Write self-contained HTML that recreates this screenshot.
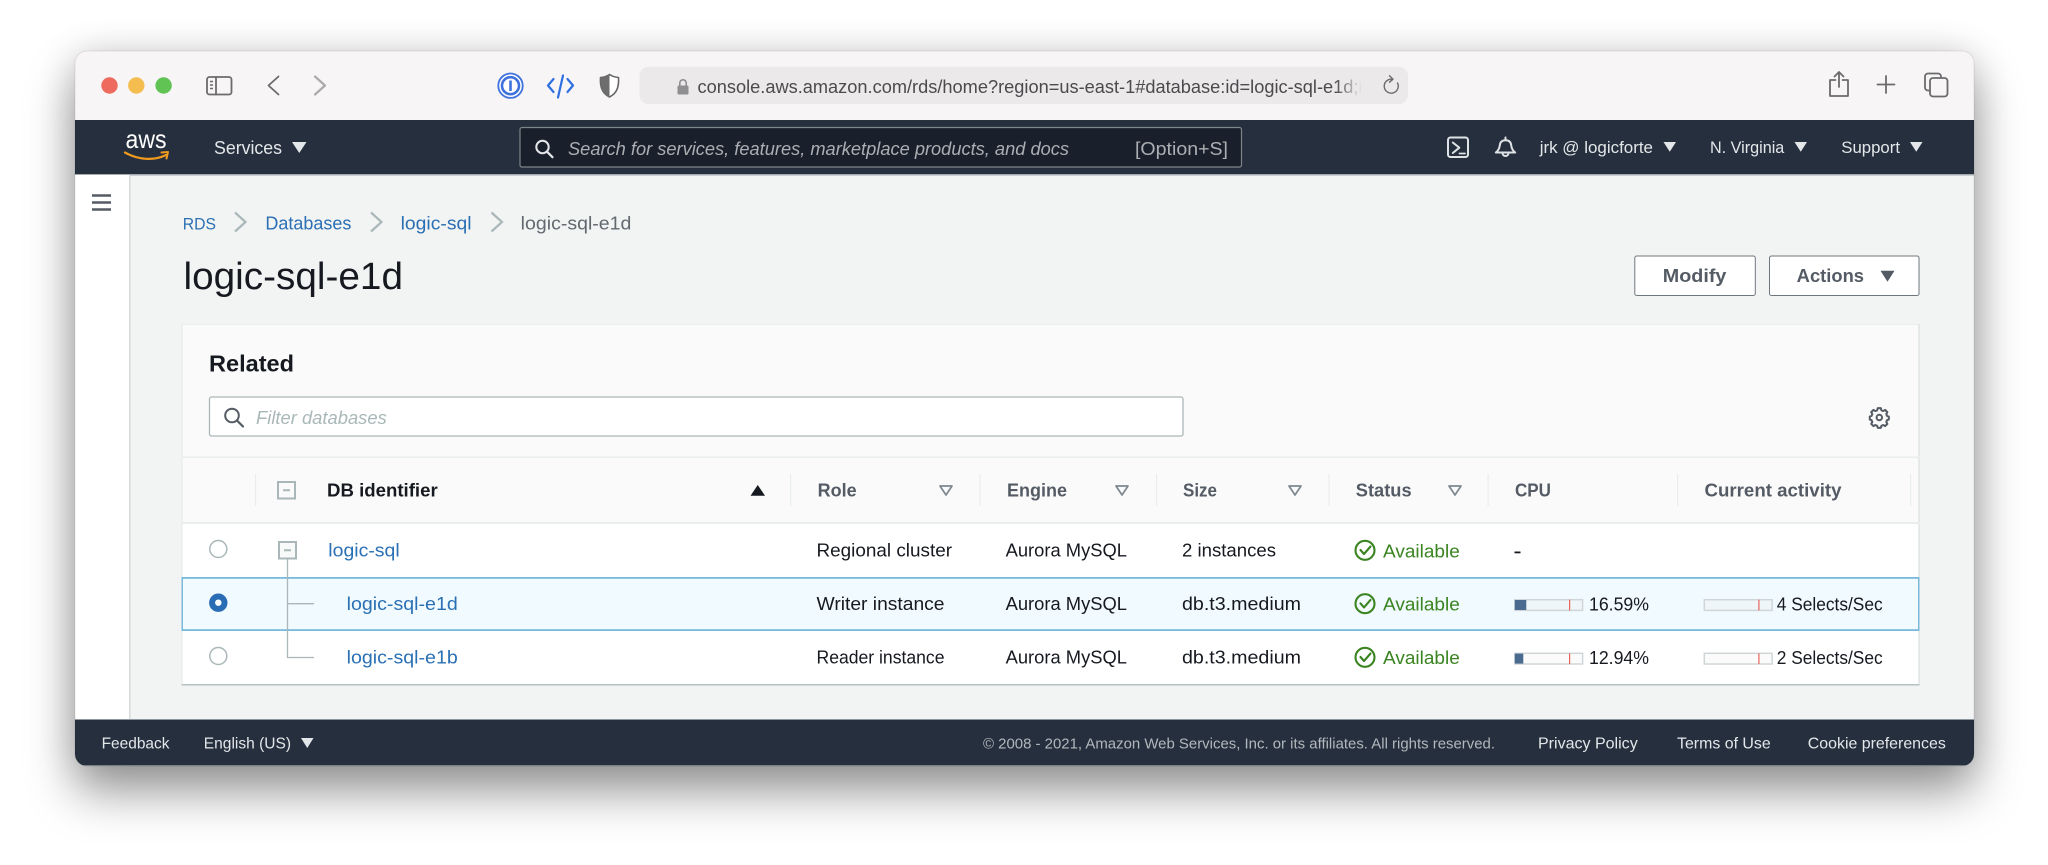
<!DOCTYPE html>
<html lang="en"><head><meta charset="utf-8"><title>logic-sql-e1d</title>
<style>
html,body{margin:0;padding:0;background:#fff;width:2048px;height:865px;overflow:hidden}
#shadow{position:absolute;left:75px;top:51px;width:1899px;height:715px;border-radius:12px;background:#fff;box-shadow:0 26px 48px rgba(0,0,0,.40),0 0 36px rgba(0,0,0,.13)}
svg{position:absolute;left:0;top:0;filter:blur(.35px)}
text{font-family:"Liberation Sans",Arial,sans-serif;font-size:18px;white-space:pre}
.b{font-weight:700}
.i{font-style:italic}
.lnk{fill:#2a70b4}
.dk{fill:#16191f}
.gy{fill:#545b64}
.nv{fill:#e4e7e9;font-size:17px}
.gn{fill:#3a8421}
.ft{fill:#e4e7e9;font-size:16px}
.tb{fill:none;stroke:#6b6b6d;stroke-width:1.8;stroke-linecap:round;stroke-linejoin:round}
.wh{fill:none;stroke:#dfe3e5;stroke-width:2;stroke-linecap:round;stroke-linejoin:round}
</style></head><body>
<div id="shadow"></div>
<svg width="2048" height="865" viewBox="0 0 2048 865" xmlns="http://www.w3.org/2000/svg">
<defs>
<clipPath id="w"><rect x="75" y="51" width="1899" height="715" rx="12"/></clipPath>
<linearGradient id="fade" x1="0" x2="1" y1="0" y2="0"><stop offset="0" stop-color="#ebe9ea" stop-opacity="0"/><stop offset=".75" stop-color="#ebe9ea"/><stop offset="1" stop-color="#ebe9ea"/></linearGradient>
</defs>
<g clip-path="url(#w)">
<!-- base -->
<rect x="75" y="51" width="1899" height="715" fill="#f2f3f3"/>
<!-- toolbar -->
<rect x="75" y="51" width="1899" height="69" fill="#f7f5f6"/>
<circle cx="109.500" cy="85.500" r="8.200" fill="#ee6a5e"/>
<circle cx="136.300" cy="85.500" r="8.200" fill="#f5bd4f"/>
<circle cx="163.600" cy="85.500" r="8.200" fill="#61c354"/>
<!-- sidebar icon -->
<rect x="207" y="77" width="24.500" height="17.500" rx="2.500" class="tb"/>
<path d="M216 77v17.500" class="tb"/>
<path d="M210 81.500h3M210 85h3M210 88.500h3" stroke="#6b6b6d" stroke-width="1.400"/>
<path d="M278.500 76.500l-10 9 10 9" class="tb" stroke-width="2.200"/>
<path d="M315 76.500l10 9-10 9" fill="none" stroke="#aaa9ab" stroke-width="2.200" stroke-linecap="round" stroke-linejoin="round"/>
<!-- 1password -->
<circle cx="510.500" cy="85.700" r="12.200" fill="#fff" stroke="#3f72dd" stroke-width="1.800"/>
<circle cx="510.500" cy="85.700" r="8.500" fill="#fff" stroke="#3f72dd" stroke-width="2.600"/>
<path d="M510.500 80.500v10.500" stroke="#3f72dd" stroke-width="2.600"/>
<!-- dev -->
<path d="M553.500 79l-5.500 6.500 5.500 6.500M567.500 79l5.500 6.500-5.500 6.500M563 75.500l-5 22" fill="none" stroke="#2f6fe0" stroke-width="2.200" stroke-linecap="round" stroke-linejoin="round"/>
<!-- shield -->
<path d="M609.500 74.500c3 2 6 2.800 9 3 .5 8.500-1 15.500-9 19.500-8-4-9.500-11-9-19.500 3-.2 6-1 9-3z" fill="#fff" stroke="#666" stroke-width="1.600" stroke-linejoin="round"/>
<path d="M609.500 74.500c-3 2-6 2.800-9 3-.5 8.500 1 15.500 9 19.500z" fill="#6d6d6d"/>
<!-- url bar -->
<rect x="639.500" y="66.700" width="768.500" height="37.300" rx="9" fill="#ebe9ea"/>
<rect x="677.500" y="85.500" width="11" height="9" rx="1.500" fill="#8f8e90"/>
<path d="M679.800 85.500v-2.500a3.200 3.200 0 0 1 6.400 0v2.500" fill="none" stroke="#8f8e90" stroke-width="1.600"/>
<text x="697.500" y="93" style="font-size:18px" fill="#4b4a4c" textLength="665" lengthAdjust="spacingAndGlyphs">console.aws.amazon.com/rds/home?region=us-east-1#database:id=logic-sql-e1d;i</text>
<rect x="1335" y="70" width="36" height="30" fill="url(#fade)"/>
<path d="M1397.500 83a7 7 0 1 1-5.500-3.800" fill="none" stroke="#6b6b6d" stroke-width="1.400" stroke-linecap="round"/>
<path d="M1389.500 75.800l3.500 3.400-3.500 3" fill="none" stroke="#6b6b6d" stroke-width="1.400" stroke-linecap="round" stroke-linejoin="round"/>
<!-- right toolbar -->
<path d="M1835.500 80h-5.500v16h18v-16h-5.500M1839 87v-15M1834.500 76.500l4.500-4.500 4.500 4.500" class="tb" stroke-width="1.500"/>
<path d="M1886 76v17M1877.500 84.500h17" class="tb" stroke-width="1.700"/>
<path d="M1929 90.500h-1a3 3 0 0 1-3-3v-11a3 3 0 0 1 3-3h10a3 3 0 0 1 3 3v1" class="tb" stroke-width="1.500"/>
<rect x="1930" y="78" width="17.500" height="18.500" rx="3" class="tb" stroke-width="1.500"/>
<!-- nav -->
<rect x="75" y="120" width="1899" height="55" fill="#252f3e"/>
<rect x="75" y="174" width="1899" height="1.500" fill="#a3abb0"/>
<text x="125.500" y="148" style="font-size:26px" fill="#fff" textLength="41" lengthAdjust="spacingAndGlyphs">aws</text>
<path d="M125 152.500c13 7.500 29 8.500 41 2.500" fill="none" stroke="#ef9a1f" stroke-width="2.200" stroke-linecap="round"/>
<path d="M161.500 152.500l6.500-.5-1.500 6.500" fill="none" stroke="#ef9a1f" stroke-width="2" stroke-linecap="round" stroke-linejoin="round"/>
<text x="214" y="154" fill="#e4e7e9" textLength="68" lengthAdjust="spacingAndGlyphs">Services</text>
<path d="M292 142h14.500l-7.250 11z" fill="#e4e7e9"/>
<rect x="520" y="127.500" width="721.500" height="39.500" rx="2" fill="#1a202b" stroke="#7d8688" stroke-width="1.200"/>
<circle cx="542.500" cy="147" r="6.200" fill="none" stroke="#e4e7e9" stroke-width="2"/>
<path d="M547 151.700l5.500 5.500" stroke="#e4e7e9" stroke-width="2.200" stroke-linecap="round"/>
<text x="568" y="155" class="i" fill="#a9afb2" textLength="501" lengthAdjust="spacingAndGlyphs">Search for services, features, marketplace products, and docs</text>
<text x="1135" y="155" fill="#a9afb2" textLength="93" lengthAdjust="spacingAndGlyphs">[Option+S]</text>
<!-- terminal -->
<rect x="1448" y="137.500" width="20" height="19.500" rx="2.500" class="wh"/>
<path d="M1452.800 142.500l6.500 5.200-6.500 5.300" fill="none" stroke="#dfe3e5" stroke-width="2" stroke-linejoin="round" stroke-linecap="round"/>
<path d="M1459.500 153.500h5.500" fill="none" stroke="#dfe3e5" stroke-width="1.800" stroke-linecap="round"/>
<!-- bell -->
<path d="M1505.500 137.500v2.800M1495.800 152.500c3-2.200 3.700-4.800 4-7.300.4-3.200 2.400-4.900 5.700-4.900s5.300 1.700 5.700 4.900c.3 2.500 1 5.100 4 7.300z" class="wh" stroke-width="1.900"/>
<path d="M1502.500 153a3 3 0 0 0 6 0" class="wh" stroke-width="1.900"/>
<text x="1539.700" y="153" class="nv" textLength="113.300" lengthAdjust="spacingAndGlyphs">jrk @ logicforte</text>
<path d="M1663.500 142h12.500l-6.250 9.800z" fill="#e4e7e9"/>
<text x="1710" y="153" class="nv" textLength="74.300" lengthAdjust="spacingAndGlyphs">N. Virginia</text>
<path d="M1794.500 142h12.500l-6.250 9.800z" fill="#e4e7e9"/>
<text x="1841.300" y="153" class="nv" textLength="58.700" lengthAdjust="spacingAndGlyphs">Support</text>
<path d="M1910 142h12.500l-6.250 9.800z" fill="#e4e7e9"/>
<!-- sidebar -->
<rect x="75" y="175" width="54" height="545" fill="#fff"/>
<rect x="129" y="175" width="1.500" height="545" fill="#d5dbdb"/>
<path d="M92 195.500h19M92 202.500h19M92 209.500h19" stroke="#545b64" stroke-width="2.400"/>
<!-- breadcrumb -->
<text x="182.800" y="229.300" class="lnk" style="font-size:17px" textLength="33.200" lengthAdjust="spacingAndGlyphs">RDS</text>
<path d="M235 212.500l10.500 9.500-10.500 9.500" fill="none" stroke="#aab7b8" stroke-width="2.200"/>
<text x="265.400" y="229.300" class="lnk" textLength="86" lengthAdjust="spacingAndGlyphs">Databases</text>
<path d="M371 212.500l10.500 9.500-10.500 9.500" fill="none" stroke="#aab7b8" stroke-width="2.200"/>
<text x="400.600" y="229.300" class="lnk" textLength="71" lengthAdjust="spacingAndGlyphs">logic-sql</text>
<path d="M491.500 212.500l10.500 9.500-10.500 9.500" fill="none" stroke="#aab7b8" stroke-width="2.200"/>
<text x="520.700" y="229.300" fill="#62696f" textLength="110.700" lengthAdjust="spacingAndGlyphs">logic-sql-e1d</text>
<text x="183.500" y="289" class="dk" style="font-size:38px" textLength="219.500" lengthAdjust="spacingAndGlyphs">logic-sql-e1d</text>
<!-- buttons -->
<rect x="1634.800" y="256" width="120.500" height="39.500" rx="2" fill="#fff" stroke="#6f777e" stroke-width="1"/>
<text x="1662.800" y="282" class="b gy" textLength="63.600" lengthAdjust="spacingAndGlyphs">Modify</text>
<rect x="1769.500" y="256" width="149.500" height="39.500" rx="2" fill="#fff" stroke="#6f777e" stroke-width="1"/>
<text x="1796.700" y="282" class="b gy" textLength="67.300" lengthAdjust="spacingAndGlyphs">Actions</text>
<path d="M1880.500 270.700h14l-7 11z" fill="#545b64"/>
<!-- card -->
<rect x="181.500" y="324" width="1738" height="361.500" fill="#aab7b8" opacity=".85"/>
<rect x="181.500" y="324" width="1738" height="360" fill="#fff"/>
<rect x="181.500" y="324" width="1738" height="199" fill="#fafafa"/>
<rect x="181.500" y="324" width="1738" height="1" fill="#eaeded"/>
<rect x="181.500" y="324" width="1" height="360" fill="#e4e7e8"/>
<rect x="1918.500" y="324" width="1" height="360" fill="#d5dbdb"/>
<text x="209" y="371.700" class="b dk" style="font-size:23px" textLength="85" lengthAdjust="spacingAndGlyphs">Related</text>
<rect x="209.500" y="397" width="973.500" height="39" rx="2" fill="#fff" stroke="#aab7b8" stroke-width="1.300"/>
<circle cx="232" cy="415.500" r="6.800" fill="none" stroke="#545b64" stroke-width="2"/>
<path d="M237 420.500l6 6" stroke="#545b64" stroke-width="2.200" stroke-linecap="round"/>
<text x="256" y="424" class="i" fill="#aab7b8" textLength="130.800" lengthAdjust="spacingAndGlyphs">Filter databases</text>
<!-- gear -->
<g transform="translate(1879.300 416.500) scale(.76) translate(-1879 -415.700)">
<path d="M1877 406h4l.8 2.800 2.400 1 2.600-1.400 2.800 2.800-1.400 2.600 1 2.400 2.300.8v4l-2.300.8-1 2.400 1.400 2.600-2.800 2.800-2.600-1.400-2.400 1-.8 2.800h-4l-.8-2.800-2.400-1-2.600 1.400-2.800-2.800 1.400-2.600-1-2.400-2.300-.8v-4l2.300-.8 1-2.400-1.400-2.600 2.800-2.800 2.600 1.400 2.400-1z" transform="translate(0 -1.300)" fill="none" stroke="#545b64" stroke-width="2.700" stroke-linejoin="round"/>
<circle cx="1879" cy="417" r="3.600" fill="none" stroke="#545b64" stroke-width="2.600"/>
</g>
<!-- header -->
<rect x="181.500" y="456.500" width="1738" height="1.500" fill="#eaeded"/>
<rect x="181.500" y="522" width="1738" height="2" fill="#eaeded"/>
<g fill="#eaeded">
<rect x="255" y="474" width="1.200" height="32"/><rect x="790" y="474" width="1.200" height="32"/><rect x="979.500" y="474" width="1.200" height="32"/><rect x="1156" y="474" width="1.200" height="32"/><rect x="1328.500" y="474" width="1.200" height="32"/><rect x="1487.500" y="474" width="1.200" height="32"/><rect x="1677" y="474" width="1.200" height="32"/><rect x="1910" y="474" width="1.200" height="32"/>
</g>
<rect x="278" y="482" width="17" height="16.500" fill="#fafafa" stroke="#aab7b8" stroke-width="2"/>
<path d="M283 490.300h7" stroke="#aab7b8" stroke-width="2"/>
<text x="327" y="496.700" class="b dk" textLength="110.700" lengthAdjust="spacingAndGlyphs">DB identifier</text>
<path d="M750.500 495.700h14.500l-7.250-10.700z" fill="#16191f"/>
<text x="817.600" y="496.700" class="b gy" textLength="39" lengthAdjust="spacingAndGlyphs">Role</text>
<text x="1007" y="496.700" class="b gy" textLength="60" lengthAdjust="spacingAndGlyphs">Engine</text>
<text x="1183" y="496.700" class="b gy" textLength="34" lengthAdjust="spacingAndGlyphs">Size</text>
<text x="1355.800" y="496.700" class="b gy" textLength="55.800" lengthAdjust="spacingAndGlyphs">Status</text>
<text x="1515" y="496.700" class="b gy" textLength="36" lengthAdjust="spacingAndGlyphs">CPU</text>
<text x="1704.500" y="496.700" class="b gy" textLength="137" lengthAdjust="spacingAndGlyphs">Current activity</text>
<g fill="none" stroke="#7d8890" stroke-width="1.700" stroke-linejoin="round">
<path d="M940 486h12l-6 9z"/><path d="M1116 486h12l-6 9z"/><path d="M1289 486h12l-6 9z"/><path d="M1449 486h12l-6 9z"/>
</g>
<!-- selected row -->
<rect x="182.500" y="577.500" width="1736" height="53" fill="#f1faff"/>
<rect x="181.500" y="577" width="1738" height="1.800" fill="#79b9dc"/>
<rect x="181.500" y="629.200" width="1738" height="1.800" fill="#79b9dc"/>
<rect x="181.500" y="577" width="1.500" height="54" fill="#79b9dc"/>
<rect x="1918" y="577" width="1.500" height="54" fill="#79b9dc"/>
<!-- radios -->
<circle cx="218.300" cy="549" r="8.500" fill="#fff" stroke="#aab7b8" stroke-width="1.500"/>
<circle cx="218.300" cy="602.700" r="6.200" fill="#fff" stroke="#2a6db5" stroke-width="6"/>
<circle cx="218.300" cy="656" r="8.500" fill="#fff" stroke="#aab7b8" stroke-width="1.500"/>
<!-- tree -->
<rect x="279" y="542" width="17" height="16.500" fill="#f8f9f9" stroke="#aab7b8" stroke-width="2"/>
<path d="M284 550.300h7" stroke="#aab7b8" stroke-width="2"/>
<path d="M287.500 559v98.500h26.500M287.500 603.700h26.500" fill="none" stroke="#aab7b8" stroke-width="1.300"/>
<text x="328.300" y="556.700" class="lnk" textLength="71.400" lengthAdjust="spacingAndGlyphs">logic-sql</text>
<text x="346.600" y="610" class="lnk" textLength="111.200" lengthAdjust="spacingAndGlyphs">logic-sql-e1d</text>
<text x="346.600" y="663.300" class="lnk" textLength="111.200" lengthAdjust="spacingAndGlyphs">logic-sql-e1b</text>
<text x="816.500" y="556.700" class="dk" textLength="135.500" lengthAdjust="spacingAndGlyphs">Regional cluster</text>
<text x="816.500" y="610" class="dk" textLength="128" lengthAdjust="spacingAndGlyphs">Writer instance</text>
<text x="816.500" y="663.300" class="dk" textLength="128" lengthAdjust="spacingAndGlyphs">Reader instance</text>
<text x="1005.600" y="556.700" class="dk" textLength="121.400" lengthAdjust="spacingAndGlyphs">Aurora MySQL</text>
<text x="1005.600" y="610" class="dk" textLength="121.400" lengthAdjust="spacingAndGlyphs">Aurora MySQL</text>
<text x="1005.600" y="663.300" class="dk" textLength="121.400" lengthAdjust="spacingAndGlyphs">Aurora MySQL</text>
<text x="1182" y="556.700" class="dk" textLength="94" lengthAdjust="spacingAndGlyphs">2 instances</text>
<text x="1182" y="610" class="dk" textLength="119" lengthAdjust="spacingAndGlyphs">db.t3.medium</text>
<text x="1182" y="663.300" class="dk" textLength="119" lengthAdjust="spacingAndGlyphs">db.t3.medium</text>
<!-- status -->
<g fill="none" stroke="#3a8421" stroke-width="2.100" stroke-linecap="round" stroke-linejoin="round">
<circle cx="1365" cy="550.300" r="9.500"/><path d="M1360.500 550l3.500 4 6.500-7.500"/>
<circle cx="1365" cy="603.700" r="9.500"/><path d="M1360.500 603.400l3.500 4 6.500-7.500"/>
<circle cx="1365" cy="657.300" r="9.500"/><path d="M1360.500 657l3.500 4 6.500-7.500"/>
</g>
<text x="1383" y="557.300" class="gn" textLength="76.800" lengthAdjust="spacingAndGlyphs">Available</text>
<text x="1383" y="610.600" class="gn" textLength="76.800" lengthAdjust="spacingAndGlyphs">Available</text>
<text x="1383" y="664.200" class="gn" textLength="76.800" lengthAdjust="spacingAndGlyphs">Available</text>
<rect x="1514.500" y="551.500" width="6" height="1.800" fill="#16191f"/>
<!-- bars -->
<rect x="1514.800" y="599.700" width="67.800" height="10.700" fill="#eff6fa" stroke="#d0d6d8" stroke-width="1.500"/>
<rect x="1514.800" y="600" width="11.500" height="10" fill="#4a6a8f"/>
<rect x="1569" y="599.700" width="1.200" height="10.700" fill="#e8645a"/>
<text x="1589" y="610.700" class="dk" textLength="60" lengthAdjust="spacingAndGlyphs">16.59%</text>
<rect x="1514.800" y="653.300" width="67.800" height="10.700" fill="#fbfbfb" stroke="#d0d6d8" stroke-width="1.500"/>
<rect x="1514.800" y="653.600" width="8.500" height="10" fill="#4a6a8f"/>
<rect x="1569" y="653.300" width="1.200" height="10.700" fill="#e8645a"/>
<text x="1589" y="664.200" class="dk" textLength="60" lengthAdjust="spacingAndGlyphs">12.94%</text>
<rect x="1704.300" y="599.700" width="67.800" height="10.700" fill="#eff6fa" stroke="#d0d6d8" stroke-width="1.500"/>
<rect x="1758.300" y="599.700" width="1.200" height="10.700" fill="#e8645a"/>
<text x="1776.800" y="610.700" class="dk" textLength="105.800" lengthAdjust="spacingAndGlyphs">4 Selects/Sec</text>
<rect x="1704.300" y="653.300" width="67.800" height="10.700" fill="#fbfbfb" stroke="#d0d6d8" stroke-width="1.500"/>
<rect x="1758.300" y="653.300" width="1.200" height="10.700" fill="#e8645a"/>
<text x="1776.800" y="664.200" class="dk" textLength="105.800" lengthAdjust="spacingAndGlyphs">2 Selects/Sec</text>
<!-- footer -->
<rect x="75" y="719" width="1899" height="47" fill="#252f3e"/>
<rect x="75" y="719" width="1899" height="1" fill="#8d969c"/>
<rect x="75" y="765" width="1899" height="1" fill="#7d868c"/>
<text x="101.600" y="748.300" class="ft" textLength="67.900" lengthAdjust="spacingAndGlyphs">Feedback</text>
<text x="203.800" y="748.300" class="ft" textLength="87.200" lengthAdjust="spacingAndGlyphs">English (US)</text>
<path d="M301 738h12.500l-6.250 10z" fill="#e4e7e9"/>
<text x="983" y="748.300" fill="#b2b8bc" style="font-size:14.500px" textLength="512" lengthAdjust="spacingAndGlyphs">© 2008 - 2021, Amazon Web Services, Inc. or its affiliates. All rights reserved.</text>
<text x="1538" y="748.300" class="ft" textLength="99.700" lengthAdjust="spacingAndGlyphs">Privacy Policy</text>
<text x="1677" y="748.300" class="ft" textLength="93.700" lengthAdjust="spacingAndGlyphs">Terms of Use</text>
<text x="1807.800" y="748.300" class="ft" textLength="138" lengthAdjust="spacingAndGlyphs">Cookie preferences</text>
</g>
<rect x="75" y="51" width="1899" height="715" rx="12" fill="none" stroke="#000" stroke-opacity=".09" stroke-width="1"/>
</svg>
</body></html>
